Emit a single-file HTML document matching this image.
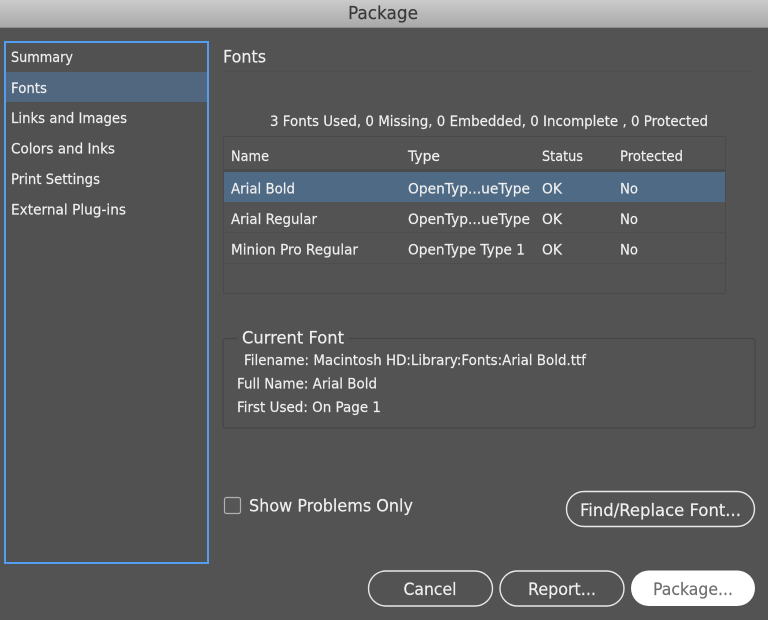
<!DOCTYPE html>
<html>
<head>
<meta charset="utf-8">
<title>Package</title>
<style>
html,body{margin:0;padding:0;background:#535353;width:768px;height:620px;overflow:hidden}
svg{display:block}
text{font-family:"DejaVu Sans","Liberation Sans",sans-serif;font-size:14.6px;fill:#f0f0f0;stroke:#f0f0f0;stroke-width:.18px}
.g{filter:blur(0.3px)}
</style>
</head>
<body>
<svg width="768" height="620" viewBox="0 0 768 620" xmlns="http://www.w3.org/2000/svg">
<defs>
<linearGradient id="tb" x1="0" y1="0" x2="0" y2="1">
<stop offset="0" stop-color="#cbcbcb"/>
<stop offset="1" stop-color="#a9a9a9"/>
</linearGradient>
</defs>
<rect width="768" height="620" fill="#535353"/>
<rect width="768" height="27" fill="url(#tb)"/>
<rect y="27" width="768" height="1" fill="#8e8e8e"/>

<!-- sidebar -->
<rect x="5" y="42" width="203" height="521" fill="#515151" stroke="#539ef0" stroke-width="2"/>
<rect x="6" y="72" width="201" height="30" fill="#51677f"/>

<!-- table -->
<rect x="223.5" y="136.5" width="502" height="157" fill="#535353" stroke="#4a4a4a"/>
<rect x="224" y="169" width="501" height="3" fill="#4b4b4b"/>
<rect x="224" y="172" width="501" height="30" fill="#4f6a85"/>
<rect x="224" y="232" width="501" height="1" fill="#4d4d4d"/>
<rect x="224" y="263" width="501" height="1" fill="#4d4d4d"/>

<!-- separator -->
<rect x="223" y="71" width="533" height="1" fill="#4f4f4f"/>

<!-- group box -->
<path d="M237.5 338.5H226a3 3 0 0 0-3 3V425a3 3 0 0 0 3 3H752a3 3 0 0 0 3-3V341.5a3 3 0 0 0-3-3H349" fill="none" stroke="#444" stroke-width="1.2"/>

<!-- checkbox -->
<rect x="224.5" y="497.5" width="16" height="16" rx="2" fill="#565656" stroke="#b0b0b0" stroke-width="1.2"/>

<!-- buttons -->
<rect x="566.5" y="491.5" width="188" height="35" rx="17.5" fill="none" stroke="#e8e8e8" stroke-width="1.4"/>
<rect x="368.5" y="571" width="124" height="35" rx="17.5" fill="none" stroke="#e8e8e8" stroke-width="1.4"/>
<rect x="500" y="571" width="124" height="35" rx="17.5" fill="none" stroke="#e8e8e8" stroke-width="1.4"/>
<rect x="631" y="570.5" width="124" height="35.5" rx="17.7" fill="#ffffff"/>

<g class="g">
<text x="348" y="19" textLength="70" lengthAdjust="spacingAndGlyphs" style="font-size:17.5px;fill:#383838;stroke:#383838">Package</text>

<text x="11" y="62" textLength="62" lengthAdjust="spacingAndGlyphs">Summary</text>
<text x="11" y="93" textLength="36" lengthAdjust="spacingAndGlyphs">Fonts</text>
<text x="11" y="123" textLength="116" lengthAdjust="spacingAndGlyphs">Links and Images</text>
<text x="11" y="153.5" textLength="104" lengthAdjust="spacingAndGlyphs">Colors and Inks</text>
<text x="11" y="184" textLength="89" lengthAdjust="spacingAndGlyphs">Print Settings</text>
<text x="11" y="214.5" textLength="115" lengthAdjust="spacingAndGlyphs">External Plug-ins</text>

<text x="223" y="62.5" textLength="43" lengthAdjust="spacingAndGlyphs" style="font-size:17px">Fonts</text>
<text x="270" y="126" textLength="438" lengthAdjust="spacingAndGlyphs">3 Fonts Used, 0 Missing, 0 Embedded, 0 Incomplete , 0 Protected</text>

<text x="231" y="161" textLength="38" lengthAdjust="spacingAndGlyphs">Name</text>
<text x="408" y="161" textLength="32" lengthAdjust="spacingAndGlyphs">Type</text>
<text x="542" y="161" textLength="41" lengthAdjust="spacingAndGlyphs">Status</text>
<text x="620" y="161" textLength="63" lengthAdjust="spacingAndGlyphs">Protected</text>

<text x="231" y="193.5" textLength="64" lengthAdjust="spacingAndGlyphs">Arial Bold</text>
<text x="408" y="193.5" textLength="122" lengthAdjust="spacingAndGlyphs">OpenTyp...ueType</text>
<text x="542" y="193.5" textLength="20" lengthAdjust="spacingAndGlyphs">OK</text>
<text x="620" y="193.5" textLength="18" lengthAdjust="spacingAndGlyphs">No</text>

<text x="231" y="224" textLength="86" lengthAdjust="spacingAndGlyphs">Arial Regular</text>
<text x="408" y="224" textLength="122" lengthAdjust="spacingAndGlyphs">OpenTyp...ueType</text>
<text x="542" y="224" textLength="20" lengthAdjust="spacingAndGlyphs">OK</text>
<text x="620" y="224" textLength="18" lengthAdjust="spacingAndGlyphs">No</text>

<text x="231" y="254.5" textLength="127" lengthAdjust="spacingAndGlyphs">Minion Pro Regular</text>
<text x="408" y="254.5" textLength="117" lengthAdjust="spacingAndGlyphs">OpenType Type 1</text>
<text x="542" y="254.5" textLength="20" lengthAdjust="spacingAndGlyphs">OK</text>
<text x="620" y="254.5" textLength="18" lengthAdjust="spacingAndGlyphs">No</text>

<text x="242" y="343.5" textLength="102" lengthAdjust="spacingAndGlyphs" style="font-size:17px">Current Font</text>
<text x="244" y="365" textLength="342" lengthAdjust="spacingAndGlyphs">Filename: Macintosh HD:Library:Fonts:Arial Bold.ttf</text>
<text x="237" y="388.5" textLength="140" lengthAdjust="spacingAndGlyphs">Full Name: Arial Bold</text>
<text x="237" y="412" textLength="144" lengthAdjust="spacingAndGlyphs">First Used: On Page 1</text>

<text x="249" y="511.5" textLength="164" lengthAdjust="spacingAndGlyphs" style="font-size:17px">Show Problems Only</text>
<text x="580" y="516" textLength="161" lengthAdjust="spacingAndGlyphs" style="font-size:17px">Find/Replace Font...</text>
<text x="403.5" y="595" textLength="53" lengthAdjust="spacingAndGlyphs" style="font-size:17px">Cancel</text>
<text x="528" y="595" textLength="68" lengthAdjust="spacingAndGlyphs" style="font-size:17px">Report...</text>
<text x="653" y="595" textLength="80" lengthAdjust="spacingAndGlyphs" style="font-size:17px;fill:#6e6e6e;stroke:#6e6e6e">Package...</text>
</g>
</svg>
</body>
</html>
